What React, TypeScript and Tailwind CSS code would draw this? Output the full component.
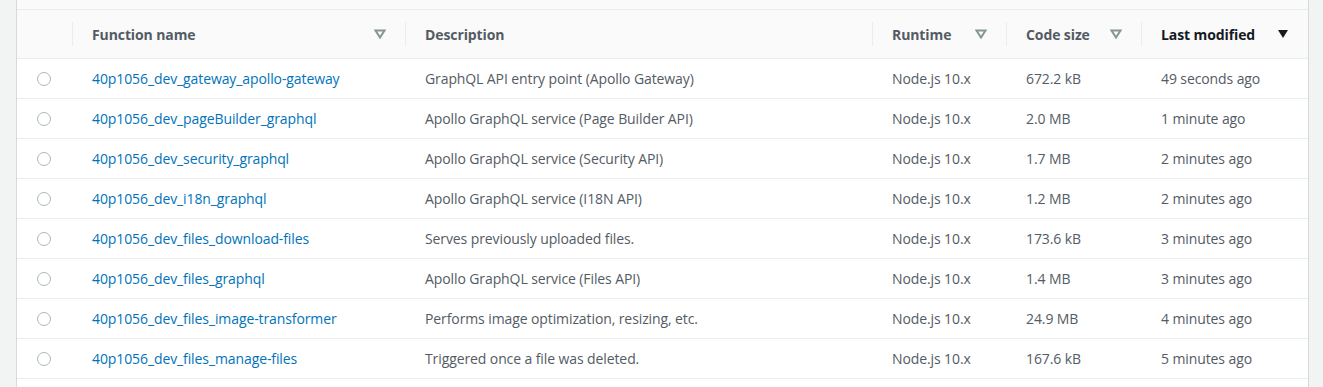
const rows = [
  ["40p1056_dev_gateway_apollo-gateway", "GraphQL API entry point (Apollo Gateway)", "Node.js 10.x", "672.2 kB", "49 seconds ago"],
  ["40p1056_dev_pageBuilder_graphql", "Apollo GraphQL service (Page Builder API)", "Node.js 10.x", "2.0 MB", "1 minute ago"],
  ["40p1056_dev_security_graphql", "Apollo GraphQL service (Security API)", "Node.js 10.x", "1.7 MB", "2 minutes ago"],
  ["40p1056_dev_i18n_graphql", "Apollo GraphQL service (I18N API)", "Node.js 10.x", "1.2 MB", "2 minutes ago"],
  ["40p1056_dev_files_download-files", "Serves previously uploaded files.", "Node.js 10.x", "173.6 kB", "3 minutes ago"],
  ["40p1056_dev_files_graphql", "Apollo GraphQL service (Files API)", "Node.js 10.x", "1.4 MB", "3 minutes ago"],
  ["40p1056_dev_files_image-transformer", "Performs image optimization, resizing, etc.", "Node.js 10.x", "24.9 MB", "4 minutes ago"],
  ["40p1056_dev_files_manage-files", "Triggered once a file was deleted.", "Node.js 10.x", "167.6 kB", "5 minutes ago"],
];

function SortIcon({ active }: { active?: boolean }) {
  if (active) {
    return (
      <svg width="12" height="10" viewBox="0 0 12 10">
        <path d="M1 1h10L6 9z" fill="#16191f" />
      </svg>
    );
  }
  return (
    <svg width="12" height="10" viewBox="0 0 12 10">
      <path d="M1.5 1.5h9L6 8.5z" fill="none" stroke="#879596" strokeWidth="2" strokeLinejoin="miter" />
    </svg>
  );
}

function Head({ label, sortable, active }: { label: string; sortable?: boolean; active?: boolean }) {
  return (
    <th className="p-0 font-bold text-left align-middle">
      <div className="flex items-center h-[48px]">
        <div className="w-px h-[24px] bg-[#eaeded]" />
        <div className={`flex-1 flex items-center justify-between pl-[19px] pr-[19px] ${active ? "text-[#16191f]" : "text-[#545b64]"}`}>
          <span>{label}</span>
          {sortable && <SortIcon active={active} />}
        </div>
      </div>
    </th>
  );
}

export default function App() {
  return (
    <div className="w-[1323px] h-[387px] bg-[#f2f3f3] flex overflow-hidden" style={{ fontFamily: '"Open Sans", "Noto Sans", sans-serif' }}>
      <div className="w-[16px] shrink-0" />
      <div className="w-[1293px] shrink-0 bg-white border-l border-r border-[#d5dbdb] text-[14px] tracking-[-0.1px]">
        <div className="h-[10px] bg-[#fafafa] border-b border-[#eaeded]" />
        <table className="table-fixed border-collapse w-full">
          <colgroup>
            <col className="w-[55px]" />
            <col className="w-[333px]" />
            <col className="w-[467px]" />
            <col className="w-[134px]" />
            <col className="w-[135px]" />
            <col />
          </colgroup>
          <thead>
            <tr className="bg-[#fafafa] border-b border-[#eaeded]">
              <th className="p-0" />
              <Head label="Function name" sortable />
              <Head label="Description" />
              <Head label="Runtime" sortable />
              <Head label="Code size" sortable />
              <Head label="Last modified" sortable active />
            </tr>
          </thead>
          <tbody>
            {rows.map((r) => (
              <tr key={r[0]} className="h-[40px] border-b border-[#eaeded]">
                <td className="p-0">
                  <div className="ml-[20px] w-[14px] h-[14px] rounded-full border border-[#aab7b8] bg-white" />
                </td>
                <td className="p-0 pl-[20px] text-[#0073bb] whitespace-nowrap">{r[0]}</td>
                <td className="p-0 pl-[20px] text-[#545b64] whitespace-nowrap">{r[1]}</td>
                <td className="p-0 pl-[20px] text-[#545b64] whitespace-nowrap">{r[2]}</td>
                <td className="p-0 pl-[20px] text-[#545b64] whitespace-nowrap">{r[3]}</td>
                <td className="p-0 pl-[20px] text-[#545b64] whitespace-nowrap">{r[4]}</td>
              </tr>
            ))}
          </tbody>
        </table>
      </div>
    </div>
  );
}
